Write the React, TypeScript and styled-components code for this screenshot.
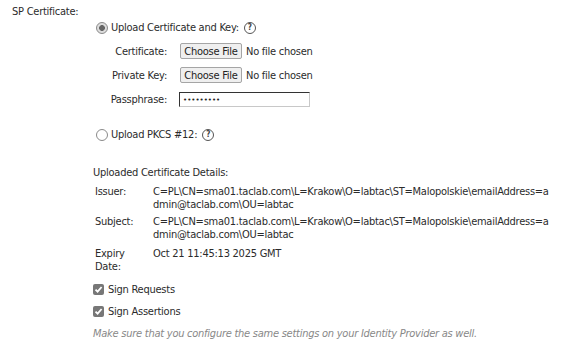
import React from 'react'
import styled, {createGlobalStyle} from 'styled-components'

const GlobalStyle = createGlobalStyle`
  html, body {
    margin: 0;
    background: #fff;
  }
  body {
    font-family: 'DejaVu Sans Condensed', 'DejaVu Sans', sans-serif;
    font-size: 11px;
    letter-spacing: -0.25px;
    color: #2b2b2b;
  }
`

const issuer =
  'C=PL\\CN=sma01.taclab.com\\L=Krakow\\O=labtac\\ST=Malopolskie\\emailAddress=admin@taclab.com\\OU=labtac'

export default function App() {
  return (
    <>
      <GlobalStyle />
      <FormRow>
        <RowLabel>SP Certificate:</RowLabel>
        <Content>
          <Option top={16}>
            <Radio checked />
            <span>Upload Certificate and Key:</span>
            <Help>?</Help>
          </Option>

          <Fields>
            <FieldLabel>Certificate:</FieldLabel>
            <FileControl>
              <FileButton type="button">Choose File</FileButton>
              <span>No file chosen</span>
            </FileControl>

            <FieldLabel>Private Key:</FieldLabel>
            <FileControl>
              <FileButton type="button">Choose File</FileButton>
              <span>No file chosen</span>
            </FileControl>

            <FieldLabel>Passphrase:</FieldLabel>
            <Password type="password" defaultValue="secretkey" />
          </Fields>

          <Option top={21}>
            <Radio />
            <span>Upload PKCS #12:</span>
            <Help>?</Help>
          </Option>

          <DetailsTitle>Uploaded Certificate Details:</DetailsTitle>
          <Details>
            <DetailLabel>Issuer:</DetailLabel>
            <DetailValue>{issuer}</DetailValue>
            <DetailLabel>Subject:</DetailLabel>
            <DetailValue>{issuer}</DetailValue>
            <DetailLabel $top={2}>Expiry Date:</DetailLabel>
            <DetailValue $top={2}>Oct 21 11:45:13 2025 GMT</DetailValue>
          </Details>

          <Check top={10}>
            <Box />
            <span>Sign Requests</span>
          </Check>
          <Check top={9}>
            <Box />
            <span>Sign Assertions</span>
          </Check>
          <Note>
            Make sure that you configure the same settings on your Identity
            Provider as well.
          </Note>
        </Content>
      </FormRow>
    </>
  )
}

function Box() {
  return (
    <CheckBox>
      <svg width="9" height="9" viewBox="0 0 9 9">
        <path
          d="M1.5 4.6 L3.6 6.7 L7.6 2"
          fill="none"
          stroke="#fff"
          strokeWidth="1.8"
        />
      </svg>
    </CheckBox>
  )
}

const FormRow = styled.div`
  display: grid;
  grid-template-columns: 81px 1fr;
  padding: 5px 0 0 12px;
`

const RowLabel = styled.div`
  line-height: 13px;
`

const Content = styled.div`
  display: flex;
  flex-direction: column;
`

const Option = styled.label<{top: number}>`
  display: flex;
  align-items: center;
  gap: 3px;
  margin: ${({top}) => top}px 0 0 3px;
  line-height: 13px;
`

const Radio = styled.span<{checked?: boolean}>`
  width: 10px;
  height: 10px;
  border-radius: 50%;
  border: 1px solid #8a8a8a;
  background: ${({checked}) =>
    checked
      ? 'radial-gradient(circle, #666 0 2.6px, #ddd 3.2px)'
      : '#fff'};
  flex: none;
`

const Help = styled.span`
  width: 10px;
  height: 10px;
  border-radius: 50%;
  border: 1px solid #555;
  font-size: 8px;
  line-height: 10px;
  letter-spacing: 0;
  text-align: center;
  font-weight: bold;
  color: #444;
  margin-left: 2px;
`

const Fields = styled.div`
  display: grid;
  grid-template-columns: 74px auto;
  column-gap: 13px;
  row-gap: 8px;
  margin-top: 9px;
  align-items: center;
  justify-content: start;
`

const FieldLabel = styled.div`
  text-align: right;
`

const FileControl = styled.div`
  display: flex;
  align-items: center;
  gap: 4px;
`

const FileButton = styled.button`
  font: inherit;
  letter-spacing: inherit;
  color: #222;
  height: 16px;
  width: 62px;
  padding: 0;
  border: 1px solid #a5a5a5;
  border-radius: 2px;
  background: #efefef;
`

const Password = styled.input`
  width: 131px;
  height: 15px;
  box-sizing: border-box;
  margin: 1px 0 0 -1px;
  border: 1px solid #c8c8c8;
  border-top-color: #333;
  border-left-color: #333;
  font-family: 'DejaVu Sans', sans-serif;
  font-size: 7px;
  letter-spacing: 0;
  padding: 0 3px;
  color: #222;
  outline: none;
`

const DetailsTitle = styled.div`
  margin-top: 25px;
  line-height: 13px;
`

const Details = styled.div`
  display: grid;
  grid-template-columns: 58px 1fr;
  row-gap: 4px;
  margin: 6px 0 0 2px;
  line-height: 13px;
`

const DetailLabel = styled.div<{$top?: number}>`
  width: 36px;
  margin-top: ${({$top}) => $top ?? 0}px;
`

const DetailValue = styled.div<{$top?: number}>`
  word-break: break-all;
  padding-right: 8px;
  margin-top: ${({$top}) => $top ?? 0}px;
`

const Check = styled.label<{top: number}>`
  display: flex;
  align-items: center;
  gap: 4px;
  margin-top: ${({top}) => top}px;
  line-height: 13px;
`

const CheckBox = styled.span`
  width: 11px;
  height: 11px;
  border-radius: 2px;
  background: #777;
  display: flex;
  align-items: center;
  justify-content: center;
`

const Note = styled.div`
  margin-top: 9px;
  font-style: italic;
  color: #888;
  line-height: 13px;
`
